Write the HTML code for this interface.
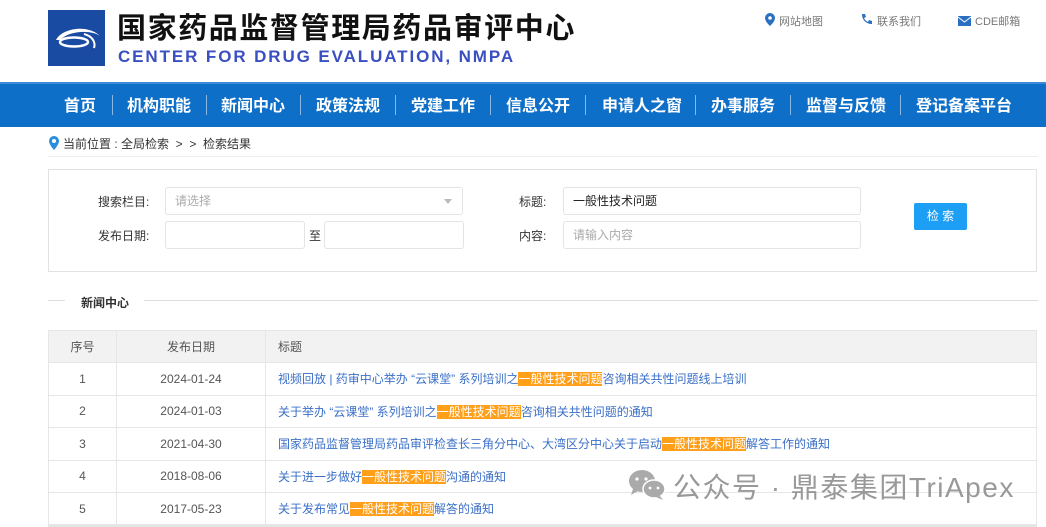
<!DOCTYPE html>
<html style="height:527px;overflow:hidden"><head><meta charset="utf-8"><style>
*{margin:0;padding:0;box-sizing:border-box}
body{width:1046px;height:527px;overflow:hidden;background:#fff;font-family:"Liberation Sans","Noto Sans CJK SC",sans-serif;position:relative;color:#333}
.a{position:absolute;white-space:nowrap}
.nav{position:absolute;left:0;top:82px;width:1046px;height:45px;background:#0e6fc8;border-top:2px solid #3d8ad6}
.nav span{position:absolute;top:8px;color:#fff;font-weight:bold;font-size:16px}
.nav i{position:absolute;top:11px;width:1px;height:20px;background:#8ab8e6}
.inp{position:absolute;border:1px solid #e4e4e4;border-radius:3px;background:#fff;font-size:12px;color:#aaa;padding-left:9px;line-height:26px;height:28px}
.lbl{position:absolute;font-size:12px;color:#333}
table{position:absolute;left:48px;top:330px;width:989px;border-collapse:collapse;font-size:12px}
td{border:1px solid #e6e6e6;height:32.5px;color:#555}
tr.h td{background:#f2f2f2;height:32px}
td.c{text-align:center}
td.t{padding-left:12px;color:#3a6fc8}
b.hl{background:#ff9f1a;color:#fff;font-weight:normal}
</style></head><body>
<svg class="a" style="left:48px;top:10px" width="57" height="56" viewBox="0 0 57 56"><rect width="57" height="56" fill="#1a4ba3"/><path d="M8 30 C14 18 40 14 52 26 C44 20 22 20 12 30Z" fill="#fff"/><ellipse cx="26" cy="32" rx="14" ry="4.5" fill="none" stroke="#fff" stroke-width="2.5"/><path d="M36 24 C44 26 48 32 46 38" stroke="#fff" stroke-width="2" fill="none"/></svg>
<div class="a" style="left:117px;top:5px;font-size:29px;font-weight:bold;color:#111;letter-spacing:1.6px">国家药品监督管理局药品审评中心</div>
<div class="a" style="left:118px;top:47px;font-size:17px;font-weight:bold;color:#3a4fc0;letter-spacing:1.9px">CENTER FOR DRUG EVALUATION, NMPA</div>
<svg class="a" style="left:765px;top:13px" width="10" height="13" viewBox="0 0 10 13"><path d="M5 0a5 5 0 0 0-5 5c0 3.5 5 8 5 8s5-4.5 5-8a5 5 0 0 0-5-5z" fill="#2a6fc0"/><circle cx="5" cy="5" r="1.8" fill="#fff"/></svg>
<div class="a" style="left:779px;top:13px;font-size:11px;color:#777">网站地图</div>
<svg class="a" style="left:860px;top:13px" width="13" height="13" viewBox="0 0 13 13"><path d="M2 1l3 0 1 3-2 1c1 2 2 3 4 4l1-2 3 1 0 3c-6 0-10-4-10-10z" fill="#2a6fc0"/></svg>
<div class="a" style="left:877px;top:13px;font-size:11px;color:#777">联系我们</div>
<svg class="a" style="left:958px;top:16px" width="13" height="10" viewBox="0 0 13 10"><rect width="13" height="10" fill="#2a6fc0"/><path d="M0 1l6.5 5L13 1" stroke="#fff" fill="none"/></svg>
<div class="a" style="left:975px;top:13px;font-size:11px;color:#777">CDE邮箱</div>
<div class="nav">
<span style="left:64px">首页</span><i style="left:112px"></i>
<span style="left:127px">机构职能</span><i style="left:206px"></i>
<span style="left:221px">新闻中心</span><i style="left:300px"></i>
<span style="left:316px">政策法规</span><i style="left:395px"></i>
<span style="left:411px">党建工作</span><i style="left:490px"></i>
<span style="left:506px">信息公开</span><i style="left:585px"></i>
<span style="left:602px">申请人之窗</span><i style="left:695px"></i>
<span style="left:711px">办事服务</span><i style="left:790px"></i>
<span style="left:806px">监督与反馈</span><i style="left:900px"></i>
<span style="left:916px">登记备案平台</span>
</div>
<svg class="a" style="left:49px;top:136px" width="10" height="14" viewBox="0 0 10 14"><path d="M5 0a5 5 0 0 0-5 5c0 3.5 5 9 5 9s5-5.5 5-9a5 5 0 0 0-5-5z" fill="#2a8ee0"/><circle cx="5" cy="5" r="2" fill="#fff"/></svg>
<div class="a" style="left:63px;top:135px;font-size:12px;color:#333">当前位置 : 全局检索 &nbsp;&gt; &nbsp;&gt; &nbsp;检索结果</div>
<div class="a" style="left:48px;top:156px;width:990px;height:1px;background:#eee"></div>
<div class="a" style="left:48px;top:169px;width:989px;height:103px;border:1px solid #e2e2e2"></div>
<div class="lbl" style="left:98px;top:193px">搜索栏目:</div>
<div class="inp" style="left:165px;top:187px;width:298px">请选择<span style="position:absolute;right:10px;top:11px;border:4px solid transparent;border-top:5px solid #bbb"></span></div>
<div class="lbl" style="left:98px;top:227px">发布日期:</div>
<div class="inp" style="left:165px;top:221px;width:140px"></div>
<div class="lbl" style="left:309px;top:227px">至</div>
<div class="inp" style="left:324px;top:221px;width:140px"></div>
<div class="lbl" style="left:519px;top:193px">标题:</div>
<div class="inp" style="left:563px;top:187px;width:298px;color:#222">一般性技术问题</div>
<div class="lbl" style="left:519px;top:227px">内容:</div>
<div class="inp" style="left:563px;top:221px;width:298px">请输入内容</div>
<div class="a" style="left:914px;top:203px;width:53px;height:27px;background:#1d9ff5;border-radius:2px;color:#fff;font-size:12px;text-align:center;line-height:27px">检 索</div>
<div class="a" style="left:48px;top:300px;width:17px;height:1px;background:#ddd"></div>
<div class="a" style="left:81px;top:294px;font-size:12px;color:#333;font-weight:bold">新闻中心</div>
<div class="a" style="left:144px;top:300px;width:894px;height:1px;background:#ddd"></div>
<table>
<colgroup><col style="width:68px"><col style="width:149px"><col></colgroup>
<tr class="h"><td class="c">序号</td><td class="c">发布日期</td><td style="padding-left:12px">标题</td></tr>
<tr><td class="c">1</td><td class="c">2024-01-24</td><td class="t">视频回放 | 药审中心举办 “云课堂” 系列培训之<b class="hl">一般性技术问题</b>咨询相关共性问题线上培训</td></tr>
<tr><td class="c">2</td><td class="c">2024-01-03</td><td class="t">关于举办 “云课堂” 系列培训之<b class="hl">一般性技术问题</b>咨询相关共性问题的通知</td></tr>
<tr><td class="c">3</td><td class="c">2021-04-30</td><td class="t">国家药品监督管理局药品审评检查长三角分中心、大湾区分中心关于启动<b class="hl">一般性技术问题</b>解答工作的通知</td></tr>
<tr><td class="c">4</td><td class="c">2018-08-06</td><td class="t">关于进一步做好<b class="hl">一般性技术问题</b>沟通的通知</td></tr>
<tr><td class="c">5</td><td class="c">2017-05-23</td><td class="t">关于发布常见<b class="hl">一般性技术问题</b>解答的通知</td></tr>
</table>
<div class="a" style="left:48px;top:524px;width:989px;height:3px;background:#e6e6e6"></div>
<svg class="a" style="left:627px;top:469px" width="40" height="32" viewBox="0 0 40 32"><ellipse cx="15" cy="12" rx="13" ry="11" fill="#aaa"/><path d="M6 20l-2 6 7-4z" fill="#aaa"/><ellipse cx="27" cy="20" rx="11" ry="9" fill="#aaa" stroke="#fff" stroke-width="1.5"/><path d="M33 27l3 4-7-3z" fill="#aaa"/><circle cx="10" cy="10" r="1.6" fill="#fff"/><circle cx="19" cy="10" r="1.6" fill="#fff"/><circle cx="23" cy="19" r="1.4" fill="#fff"/><circle cx="31" cy="19" r="1.4" fill="#fff"/></svg>
<div class="a" style="left:673px;top:466px;font-size:28px;color:#999;letter-spacing:1.5px">公众号 · 鼎泰集团TriApex</div>
</body></html>
